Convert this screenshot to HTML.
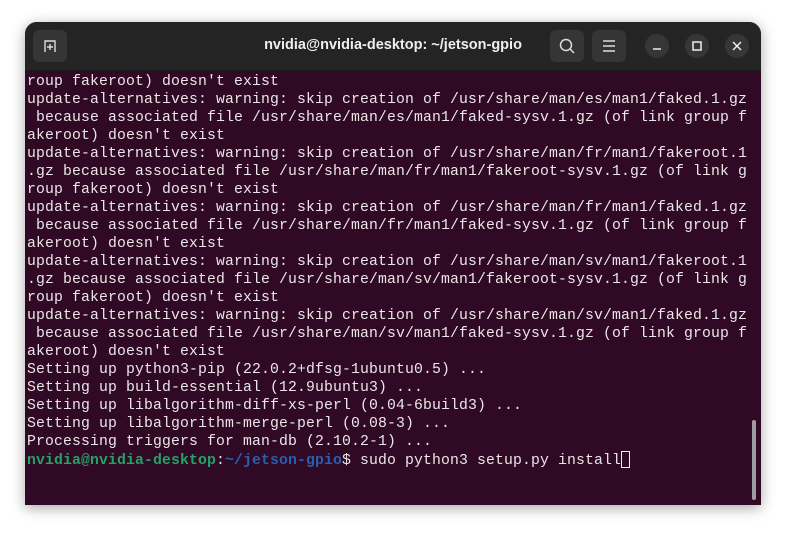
<!DOCTYPE html>
<html><head><meta charset="utf-8"><style>
body{margin:0;width:786px;height:533px;background:#fff;overflow:hidden;position:relative;font-family:"Liberation Sans",sans-serif}
.win{position:absolute;left:25px;top:22px;width:736px;height:483px;border-radius:12px 12px 0 0;overflow:hidden;background:#300a24;box-shadow:0 3px 14px rgba(0,0,0,.35)}
.hd{position:absolute;left:0;top:0;width:736px;height:48px;background:#242424;border-bottom:1px solid #1a1a1a}
.btn{position:absolute;top:8px;width:34px;height:32px;border-radius:6px;background:#353535}
.cb{position:absolute;top:12px;width:24px;height:24px;border-radius:50%;background:#363636}
.title{position:absolute;left:0;width:736px;top:15px;text-align:center;color:#eee;font-weight:bold;font-size:14.5px}
pre{position:absolute;left:2px;top:51px;margin:0;font-family:"Liberation Mono",monospace;font-size:14.8px;letter-spacing:0.12px;line-height:18px;color:#eae6e8}
.g{color:#26a269;font-weight:bold}.b{color:#2a5fb0;font-weight:bold}
.cur{display:inline-block;width:9px;height:17px;border:1px solid #eee;vertical-align:-4px;box-sizing:border-box}
.sb{position:absolute;left:727px;top:398px;width:4px;height:80px;border-radius:2px;background:#a09ba0}
</style></head><body>
<div class="win">
<div class="hd">
<div class="btn" style="left:8px"><svg width="34" height="32"><path d="M12 22V11h10v11" fill="none" stroke="#ddd" stroke-width="1.4"/><path d="M14 17h6M17 14v6" stroke="#ddd" stroke-width="1.4"/></svg></div>
<div class="title">nvidia@nvidia-desktop: ~/jetson-gpio</div>
<div class="btn" style="left:525px"><svg width="34" height="32"><circle cx="16" cy="15" r="5.5" fill="none" stroke="#ddd" stroke-width="1.5"/><path d="M20 19l4 4" stroke="#ddd" stroke-width="1.5"/></svg></div>
<div class="btn" style="left:567px"><svg width="34" height="32"><path d="M11 11h12M11 16h12M11 21h12" stroke="#ddd" stroke-width="1.4"/></svg></div>
<div class="cb" style="left:620px"><svg width="24" height="24"><path d="M8 15h8" stroke="#eee" stroke-width="1.5"/></svg></div>
<div class="cb" style="left:660px"><svg width="24" height="24"><rect x="8" y="8" width="8" height="8" fill="none" stroke="#eee" stroke-width="1.5"/></svg></div>
<div class="cb" style="left:700px"><svg width="24" height="24"><path d="M8 8l8 8M16 8l-8 8" stroke="#eee" stroke-width="1.5"/></svg></div>
</div>
<pre>roup fakeroot) doesn't exist
update-alternatives: warning: skip creation of /usr/share/man/es/man1/faked.1.gz
 because associated file /usr/share/man/es/man1/faked-sysv.1.gz (of link group f
akeroot) doesn't exist
update-alternatives: warning: skip creation of /usr/share/man/fr/man1/fakeroot.1
.gz because associated file /usr/share/man/fr/man1/fakeroot-sysv.1.gz (of link g
roup fakeroot) doesn't exist
update-alternatives: warning: skip creation of /usr/share/man/fr/man1/faked.1.gz
 because associated file /usr/share/man/fr/man1/faked-sysv.1.gz (of link group f
akeroot) doesn't exist
update-alternatives: warning: skip creation of /usr/share/man/sv/man1/fakeroot.1
.gz because associated file /usr/share/man/sv/man1/fakeroot-sysv.1.gz (of link g
roup fakeroot) doesn't exist
update-alternatives: warning: skip creation of /usr/share/man/sv/man1/faked.1.gz
 because associated file /usr/share/man/sv/man1/faked-sysv.1.gz (of link group f
akeroot) doesn't exist
Setting up python3-pip (22.0.2+dfsg-1ubuntu0.5) ...
Setting up build-essential (12.9ubuntu3) ...
Setting up libalgorithm-diff-xs-perl (0.04-6build3) ...
Setting up libalgorithm-merge-perl (0.08-3) ...
Processing triggers for man-db (2.10.2-1) ...
<span class="g">nvidia@nvidia-desktop</span>:<span class="b">~/jetson-gpio</span>$ sudo python3 setup.py install<span class="cur"></span></pre>
<div class="sb"></div>
</div>
</body></html>
